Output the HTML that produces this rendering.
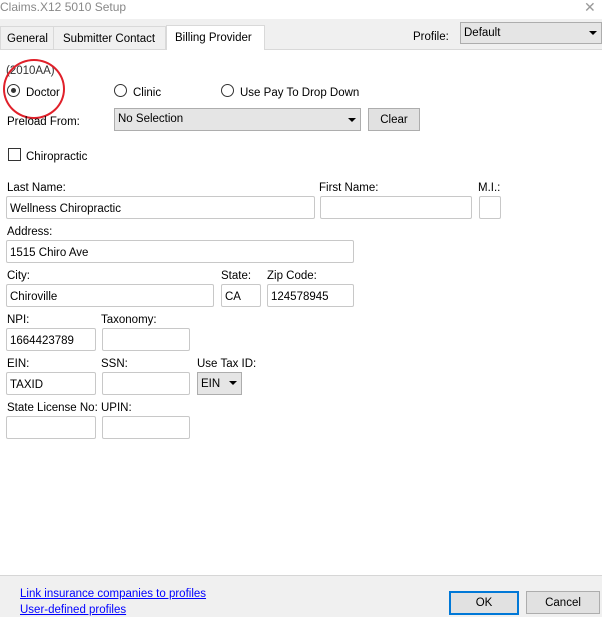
<!DOCTYPE html>
<html><head><style>
body{margin:0;width:602px;height:616px;position:relative;background:#fff;font-family:"Liberation Sans",sans-serif;font-size:11.5px;color:#000;overflow:hidden}
.a{position:absolute;white-space:nowrap;margin-top:2px}
.in{position:absolute;border:1px solid #c8c8c8;border-radius:2px;background:#fff;box-sizing:border-box;padding:5px 0 0 3px;line-height:14px}
.sel{position:absolute;border:1px solid #adadad;background:#e5e5e5;box-sizing:border-box;padding:4px 0 0 3px}
.arr{position:absolute;width:0;height:0;border-left:4px solid transparent;border-right:4px solid transparent;border-top:4px solid #000}
.rad{position:absolute;width:11px;height:11px;border:1px solid #333;border-radius:50%;background:#fff}
.btn{position:absolute;border:1px solid #adadad;background:#e1e1e1;box-sizing:border-box;text-align:center;line-height:22px}
.lnk{color:#00f;text-decoration:underline}
</style></head><body>
<div class="a" style="left:0;top:-2px;color:#888;font-size:12px">Claims.X12 5010 Setup</div>
<div class="a" style="left:584px;top:-3px;color:#999;font-size:14px;font-weight:100">✕</div>
<div style="position:absolute;left:0;top:19px;width:602px;height:30px;background:#f0f0f0;border-bottom:1px solid #d9d9d9"></div>
<div style="position:absolute;left:0;top:26px;width:54px;height:23px;border:1px solid #d9d9d9;border-bottom:none;box-sizing:border-box;background:#f0f0f0"></div>
<div class="a" style="left:7px;top:31px">General</div>
<div style="position:absolute;left:54px;top:26px;width:112px;height:23px;border:1px solid #d9d9d9;border-left:none;border-bottom:none;box-sizing:border-box;background:#f0f0f0"></div>
<div class="a" style="left:63px;top:31px">Submitter Contact</div>
<div style="position:absolute;left:166px;top:25px;width:99px;height:25px;border:1px solid #d9d9d9;border-bottom:none;box-sizing:border-box;background:#fff"></div>
<div class="a" style="left:175px;top:30px">Billing Provider</div>
<div class="a" style="left:413px;top:29px">Profile:</div>
<div class="sel" style="left:460px;top:22px;width:142px;height:22px">Default</div>
<div class="arr" style="left:589px;top:31px"></div>

<div class="a" style="left:6px;top:63px;color:#333">(2010AA)</div>
<div class="rad" style="left:7px;top:84px"></div><div style="position:absolute;left:11px;top:88px;width:5px;height:5px;border-radius:50%;background:#333"></div>
<div class="a" style="left:26px;top:85px">Doctor</div>
<div class="rad" style="left:114px;top:84px"></div>
<div class="a" style="left:133px;top:85px">Clinic</div>
<div class="rad" style="left:221px;top:84px"></div>
<div class="a" style="left:240px;top:85px">Use Pay To Drop Down</div>
<div style="position:absolute;left:3px;top:59px;width:58px;height:56px;border:2px solid #e0202a;border-radius:50%"></div>

<div class="a" style="left:7px;top:114px">Preload From:</div>
<div class="sel" style="left:114px;top:108px;width:247px;height:23px">No Selection</div>
<div class="arr" style="left:348px;top:118px"></div>
<div class="btn" style="left:368px;top:108px;width:52px;height:23px">Clear</div>

<div style="position:absolute;left:8px;top:148px;width:11px;height:11px;border:1px solid #333;background:#fff"></div>
<div class="a" style="left:26px;top:149px">Chiropractic</div>

<div class="a" style="left:7px;top:180px">Last Name:</div>
<div class="a" style="left:319px;top:180px">First Name:</div>
<div class="a" style="left:478px;top:180px">M.I.:</div>
<div class="in" style="left:6px;top:196px;width:309px;height:23px">Wellness Chiropractic</div>
<div class="in" style="left:320px;top:196px;width:152px;height:23px"></div>
<div class="in" style="left:479px;top:196px;width:22px;height:23px"></div>

<div class="a" style="left:7px;top:224px">Address:</div>
<div class="in" style="left:6px;top:240px;width:348px;height:23px">1515 Chiro Ave</div>

<div class="a" style="left:7px;top:268px">City:</div>
<div class="a" style="left:221px;top:268px">State:</div>
<div class="a" style="left:267px;top:268px">Zip Code:</div>
<div class="in" style="left:6px;top:284px;width:208px;height:23px">Chiroville</div>
<div class="in" style="left:221px;top:284px;width:40px;height:23px">CA</div>
<div class="in" style="left:267px;top:284px;width:87px;height:23px">124578945</div>

<div class="a" style="left:7px;top:312px">NPI:</div>
<div class="a" style="left:101px;top:312px">Taxonomy:</div>
<div class="in" style="left:6px;top:328px;width:90px;height:23px">1664423789</div>
<div class="in" style="left:102px;top:328px;width:88px;height:23px"></div>

<div class="a" style="left:7px;top:356px">EIN:</div>
<div class="a" style="left:101px;top:356px">SSN:</div>
<div class="a" style="left:197px;top:356px">Use Tax ID:</div>
<div class="in" style="left:6px;top:372px;width:90px;height:23px">TAXID</div>
<div class="in" style="left:102px;top:372px;width:88px;height:23px"></div>
<div class="sel" style="left:197px;top:372px;width:45px;height:23px;padding-top:5px">EIN</div>
<div class="arr" style="left:229px;top:381px"></div>

<div class="a" style="left:7px;top:400px">State License No:</div>
<div class="a" style="left:101px;top:400px">UPIN:</div>
<div class="in" style="left:6px;top:416px;width:90px;height:23px"></div>
<div class="in" style="left:102px;top:416px;width:88px;height:23px"></div>

<div style="position:absolute;left:0;top:575px;width:602px;height:41px;background:#f0f0f0;border-top:1px solid #d6d6d6"></div>
<div class="a lnk" style="left:20px;top:586px">Link insurance companies to profiles</div>
<div class="a lnk" style="left:20px;top:602px">User-defined profiles</div>
<div class="btn" style="left:449px;top:591px;width:70px;height:24px;border:2px solid #0078d7;line-height:20px">OK</div>
<div class="btn" style="left:526px;top:591px;width:74px;height:23px">Cancel</div>
</body></html>
